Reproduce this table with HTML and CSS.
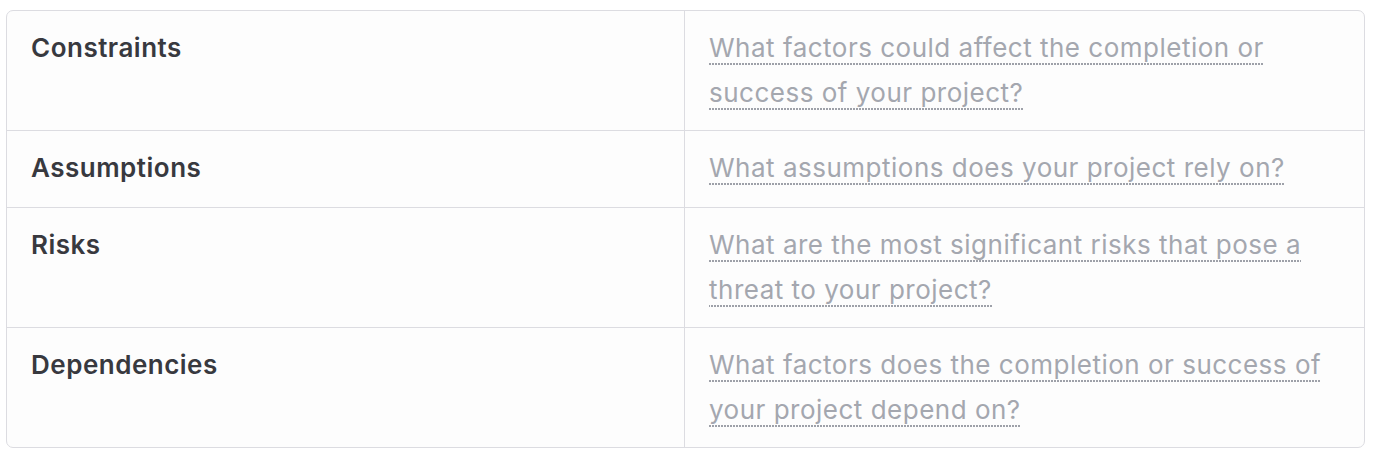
FILE: index.html
```html
<!DOCTYPE html>
<html lang="en">
<head>
<meta charset="utf-8">
<title>Project considerations</title>
<link rel="stylesheet" href="styles.css">
</head>
<body>
<div class="table">
  <div class="row">
    <div class="cell label">Constraints</div>
    <div class="cell value"><span class="ph">What factors could affect the completion or success of your project?</span></div>
  </div>
  <div class="row">
    <div class="cell label">Assumptions</div>
    <div class="cell value"><span class="ph">What assumptions does your project rely on?</span></div>
  </div>
  <div class="row">
    <div class="cell label">Risks</div>
    <div class="cell value"><span class="ph">What are the most significant risks that pose a threat to your project?</span></div>
  </div>
  <div class="row">
    <div class="cell label">Dependencies</div>
    <div class="cell value"><span class="ph">What factors does the completion or success of your project depend on?</span></div>
  </div>
</div>
</body>
</html>
```

FILE: styles.css
```css
html, body {
  margin: 0;
  padding: 0;
  background: #ffffff;
}
body {
  padding: 10px 18px 0 6px;
  font-family: "Inter", "Noto Sans", sans-serif;
}
.table {
  width: 1357px;
  border: 1px solid #dcdce1;
  border-radius: 7px;
  background: #fdfdfd;
  overflow: hidden;
}
.row {
  display: grid;
  grid-template-columns: 678px 1fr;
  border-top: 1px solid #dcdce1;
}
.row:first-child {
  border-top: none;
}
.cell {
  box-sizing: border-box;
  min-height: 76px;
  padding: 14px 24px 15px 24px;
  line-height: 45px;
  font-size: 26px;
  letter-spacing: 0.5px;
}
.label {
  font-weight: 600;
  color: #38393f;
  border-right: 1px solid #dcdce1;
}
.value {
  color: #a4a7af;
}
.ph {
  padding-bottom: 2px;
  background-image: linear-gradient(to right, #9ea1a9 0, #9ea1a9 2px, transparent 2px);
  background-size: 3px 2px;
  background-repeat: repeat-x;
  background-position: left bottom;
}
```
